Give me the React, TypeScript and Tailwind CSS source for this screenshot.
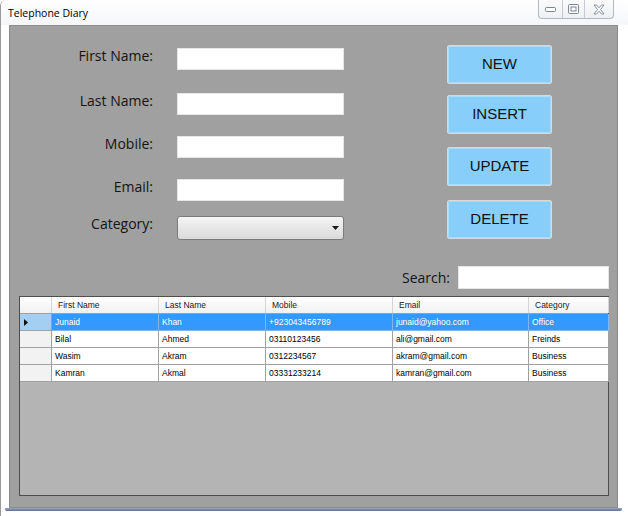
import React from "react";

const rows = [
  { f: "Junaid", l: "Khan", m: "+923043456789", e: "junaid@yahoo.com", c: "Office", sel: true },
  { f: "Bilal", l: "Ahmed", m: "03110123456", e: "ali@gmail.com", c: "Freinds", sel: false },
  { f: "Wasim", l: "Akram", m: "0312234567", e: "akram@gmail.com", c: "Business", sel: false },
  { f: "Kamran", l: "Akmal", m: "03331233214", e: "kamran@gmail.com", c: "Business", sel: false },
];

const cols = "grid grid-cols-[32px_107px_107px_127px_136px_80px]";

function Field({ label, mt, combo }: { label: string; mt: string; combo?: boolean }) {
  return (
    <div className={`flex items-start ${mt}`}>
      <div className="w-[143px] text-right text-[14px] leading-[16px] text-[#141414] font-['Open_Sans',sans-serif]">
        {label}
      </div>
      {combo ? (
        <div className="ml-[24px] w-[167px] h-[24px] rounded-[3px] border border-[#7a7a7a] bg-gradient-to-b from-[#f4f4f4] to-[#dadada] flex items-center justify-end pr-[4px]">
          <svg width="7" height="4" viewBox="0 0 7 4">
            <path d="M0 0 L7 0 L3.5 4 Z" fill="#1a1a1a" />
          </svg>
        </div>
      ) : (
        <div className="ml-[24px] w-[167px] h-[22px] bg-white border border-[#e6e6e6]" />
      )}
    </div>
  );
}

function Btn({ text, mt }: { text: string; mt: string }) {
  return (
    <div
      className={`${mt} w-[105px] h-[39px] rounded-[2px] border border-[#d8d8d8] bg-[#87cefa] flex items-center justify-center text-[15px] text-[#111] font-['Liberation_Sans',Arial,sans-serif] shadow-[inset_0_0_0_1px_#a9dcfb]`}
    >
      {text}
    </div>
  );
}

export default function App() {
  return (
    <div className="w-[628px] h-[516px] bg-white overflow-hidden flex flex-col border-l border-[#9a9a9a] rounded-tl-[6px]">
      {/* title bar */}
      <div className="h-[25px] flex justify-between bg-gradient-to-b from-[#ffffff] to-[#f4f6f9]">
        <div className="pl-[7px] pt-[6px] text-[10.5px] leading-[14px] text-black font-['Open_Sans',sans-serif]">
          Telephone Diary
        </div>
        <div className="mr-[14px] h-[19px] flex border border-t-0 border-[#b2b8c2] rounded-b-[4px] bg-gradient-to-b from-[#fbfbfc] to-[#eef0f3]">
          <div className="w-[24px] flex items-center justify-center border-r border-[#c6cbd3]">
            <svg width="11" height="6" viewBox="0 0 11 6">
              <rect x="0.5" y="1.5" width="10" height="4" rx="1" fill="#fff" stroke="#7d8594" />
            </svg>
          </div>
          <div className="w-[22px] flex items-center justify-center border-r border-[#c6cbd3]">
            <svg width="11" height="10" viewBox="0 0 11 10">
              <rect x="0.5" y="0.5" width="10" height="9" rx="1" fill="#fff" stroke="#7d8594" />
              <rect x="3" y="3" width="5" height="4" fill="none" stroke="#7d8594" />
            </svg>
          </div>
          <div className="w-[28px] flex items-center justify-center">
            <svg width="12" height="11" viewBox="0 0 12 11">
              <path
                d="M1 1 L3.5 1 L6 3.8 L8.5 1 L11 1 L7.5 5.5 L11 10 L8.5 10 L6 7.2 L3.5 10 L1 10 L4.5 5.5 Z"
                fill="#fff"
                stroke="#7d8594"
                strokeWidth="0.9"
                strokeLinejoin="round"
              />
            </svg>
          </div>
        </div>
      </div>

      {/* client */}
      <div className="ml-[8px] mr-[10px] h-[483px] bg-[#a0a0a0] border border-[#8c8c8c] flex flex-col">
        <div className="flex items-start">
          <div className="flex flex-col w-[334px]">
            <Field label="First Name:" mt="mt-[22px]" />
            <Field label="Last Name:" mt="mt-[23px]" />
            <Field label="Mobile:" mt="mt-[21px]" />
            <Field label="Email:" mt="mt-[21px]" />
            <Field label="Category:" mt="mt-[15px]" combo />
          </div>
          <div className="ml-[103px] flex flex-col">
            <Btn text="NEW" mt="mt-[19px]" />
            <Btn text="INSERT" mt="mt-[11px]" />
            <Btn text="UPDATE" mt="mt-[13px]" />
            <Btn text="DELETE" mt="mt-[14px]" />
          </div>
        </div>

        <div className="mt-[26px] h-[23px] flex justify-end items-center pr-[8px]">
          <div className="text-[14px] leading-[16px] text-[#141414] font-['Open_Sans',sans-serif]">Search:</div>
          <div className="ml-[8px] w-[151px] h-[23px] bg-white border border-[#e6e6e6]" />
        </div>

        {/* data grid */}
        <div className="mt-[7px] ml-[9px] mr-[8px] h-[200px] border border-[#4e4e4e] bg-[#b4b4b4] font-['Liberation_Sans',Arial,sans-serif] text-[8.5px]">
          <div className={`${cols} h-[17px] bg-gradient-to-b from-white to-[#f1f1f1] border-b border-[#a0a0a0]`}>
            <div className="border-r border-[#d5d5d5]" />
            {["First Name", "Last Name", "Mobile", "Email", "Category"].map((h) => (
              <div key={h} className="border-r border-[#d5d5d5] pl-[6px] leading-[16px] text-[#1a1a1a]">
                {h}
              </div>
            ))}
          </div>
          {rows.map((r) => (
            <div key={r.f} className={`${cols} h-[17px]`}>
              <div
                className={`border-r border-b border-[#a0a0a0] flex items-center pl-[4px] ${
                  r.sel ? "bg-[#a3cff2]" : "bg-[#f2f2f2]"
                }`}
              >
                {r.sel && (
                  <svg width="4" height="7" viewBox="0 0 4 7">
                    <path d="M0 0 L4 3.5 L0 7 Z" fill="#111" />
                  </svg>
                )}
              </div>
              {[r.f, r.l, r.m, r.e, r.c].map((v, i) => (
                <div
                  key={i}
                  className={`border-r border-b pl-[3px] leading-[16px] whitespace-nowrap overflow-hidden ${
                    r.sel
                      ? "bg-[#3399ff] text-white border-[#7fb8f0]"
                      : "bg-white text-black border-[#a0a0a0]"
                  }`}
                >
                  {v}
                </div>
              ))}
            </div>
          ))}
        </div>
      </div>

      {/* bottom frame */}
      <div className="ml-[4px] mr-[6px] h-[3px] bg-gradient-to-b from-[#9aa6bf] to-[#5f6f95] rounded-b-[2px]" />
    </div>
  );
}
